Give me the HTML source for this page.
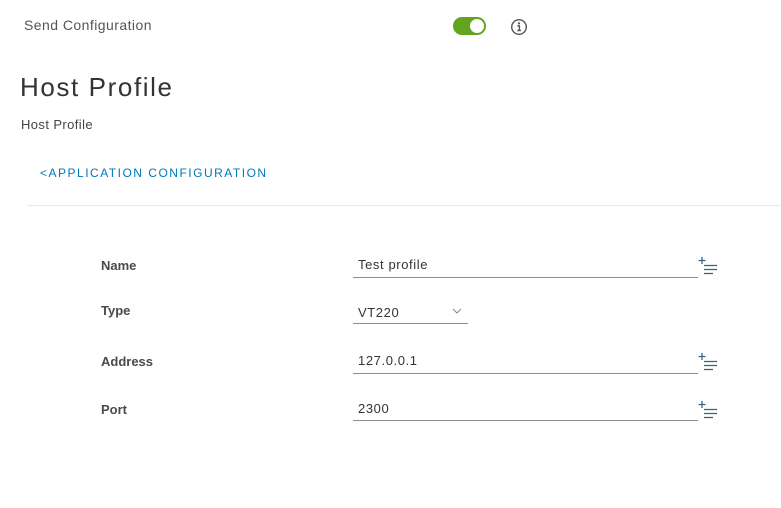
<html><head><style>
body{margin:0;width:781px;height:508px;background:#fff;font-family:"Liberation Sans",sans-serif;position:relative;overflow:hidden;color:#313131}
.a{position:absolute;white-space:nowrap}
.lbl{font-size:13px;font-weight:bold;color:#4a4a4a;left:101px}
.val{font-size:13px;color:#333;left:358px;letter-spacing:0.6px}
.ln{position:absolute;height:1px;background:#8c8c8c}
.ic{position:absolute;width:20px;height:20px}
</style></head><body>
<div class="a" style="left:24px;top:17px;font-size:14px;color:#555;letter-spacing:0.45px">Send Configuration</div>
<div class="a" style="left:453px;top:17px;width:33px;height:18px;border-radius:9px;background:#62a420"></div>
<div class="a" style="left:470px;top:19px;width:14px;height:14px;border-radius:7px;background:#fff"></div>
<svg class="a" style="left:510px;top:18px" width="18" height="18" viewBox="0 0 18 18"><circle cx="9" cy="9" r="7.3" fill="none" stroke="#555" stroke-width="1.4"/><circle cx="9" cy="5.4" r="1.1" fill="#555"/><path d="M7.3 7.8H9.4V12.3M7.3 12.5H11" stroke="#555" stroke-width="1.4" fill="none"/></svg>
<div class="a" style="left:20px;top:72px;font-size:26px;color:#333;letter-spacing:1.6px">Host Profile</div>
<div class="a" style="left:21px;top:117px;font-size:13px;color:#444;letter-spacing:0.4px">Host Profile</div>
<div class="a" style="left:40px;top:166px;font-size:12px;color:#0079b8;letter-spacing:1.5px">&lt;APPLICATION CONFIGURATION</div>
<div class="ln" style="left:27px;top:205px;width:754px;background:#e8e8e8"></div>
<div class="a lbl" style="top:258px">Name</div>
<div class="a val" style="top:257px">Test profile</div>
<div class="ln" style="left:353px;top:277px;width:345px"></div>
<div class="a lbl" style="top:303px">Type</div>
<div class="a val" style="top:305px">VT220</div>
<svg class="a" style="left:452px;top:308px" width="10" height="6"><path d="M1 1L5 5L9 1" stroke="#888" fill="none"/></svg>
<div class="ln" style="left:353px;top:323px;width:115px"></div>
<div class="a lbl" style="top:354px">Address</div>
<div class="a val" style="top:353px">127.0.0.1</div>
<div class="ln" style="left:353px;top:373px;width:345px"></div>
<div class="a lbl" style="top:402px">Port</div>
<div class="a val" style="top:401px">2300</div>
<div class="ln" style="left:353px;top:420px;width:345px"></div>
<svg class="ic" style="left:698px;top:256px" viewBox="0 0 20 20"><path d="M4 1V8M0.5 4.5H7.5M6 9.5H19M6 13.5H19M6 17.5H15" stroke="#2f6488" stroke-width="1.3" fill="none"/></svg>
<svg class="ic" style="left:698px;top:352px" viewBox="0 0 20 20"><path d="M4 1V8M0.5 4.5H7.5M6 9.5H19M6 13.5H19M6 17.5H15" stroke="#2f6488" stroke-width="1.3" fill="none"/></svg>
<svg class="ic" style="left:698px;top:400px" viewBox="0 0 20 20"><path d="M4 1V8M0.5 4.5H7.5M6 9.5H19M6 13.5H19M6 17.5H15" stroke="#2f6488" stroke-width="1.3" fill="none"/></svg>
</body></html>
